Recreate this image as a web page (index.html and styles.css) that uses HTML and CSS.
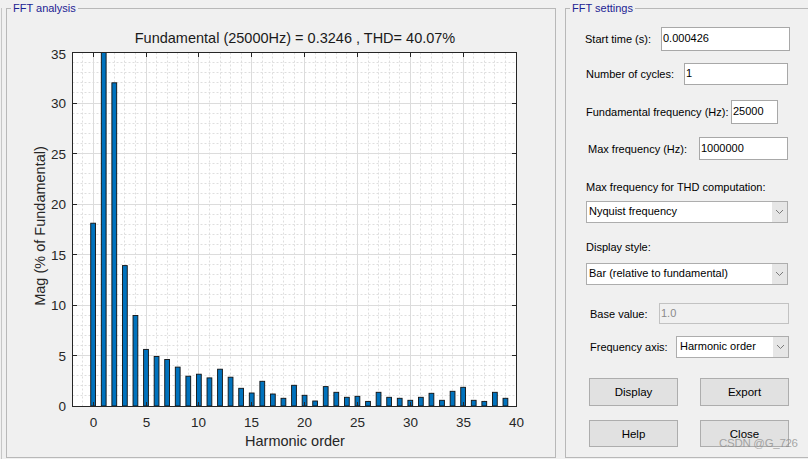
FILE: index.html
```html
<!DOCTYPE html>
<html>
<head>
<meta charset="utf-8">
<link rel="stylesheet" href="styles.css">
</head>
<body>
<div class="app">
  <div class="analysis-frame">
    <section class="group analysis">
      <span class="group-title">FFT analysis</span>
      <svg class="chart" width="548" height="448" viewBox="7 9 548 448" xmlns="http://www.w3.org/2000/svg">
        <rect x="72.5" y="52.5" width="444" height="354" fill="#ffffff"/>
        <path class="minor" d="M82.5 52.5V406M103.5 52.5V406M114.5 52.5V406M124.5 52.5V406M135.5 52.5V406M156.5 52.5V406M167.5 52.5V406M177.5 52.5V406M188.5 52.5V406M209.5 52.5V406M220.5 52.5V406M230.5 52.5V406M241.5 52.5V406M262.5 52.5V406M272.5 52.5V406M283.5 52.5V406M294.5 52.5V406M315.5 52.5V406M325.5 52.5V406M336.5 52.5V406M346.5 52.5V406M368.5 52.5V406M378.5 52.5V406M389.5 52.5V406M399.5 52.5V406M420.5 52.5V406M431.5 52.5V406M442.5 52.5V406M452.5 52.5V406M473.5 52.5V406M484.5 52.5V406M494.5 52.5V406M505.5 52.5V406"/>
        <path class="minor" d="M72.5 395.5H516M72.5 385.5H516M72.5 375.5H516M72.5 365.5H516M72.5 345.5H516M72.5 335.5H516M72.5 325.5H516M72.5 315.5H516M72.5 294.5H516M72.5 284.5H516M72.5 274.5H516M72.5 264.5H516M72.5 244.5H516M72.5 234.5H516M72.5 224.5H516M72.5 214.5H516M72.5 193.5H516M72.5 183.5H516M72.5 173.5H516M72.5 163.5H516M72.5 143.5H516M72.5 133.5H516M72.5 123.5H516M72.5 113.5H516M72.5 92.5H516M72.5 82.5H516M72.5 72.5H516M72.5 62.5H516"/>
        <path class="major" d="M93.5 52.5V406M146.5 52.5V406M198.5 52.5V406M251.5 52.5V406M304.5 52.5V406M357.5 52.5V406M410.5 52.5V406M463.5 52.5V406M72.5 355.5H516M72.5 305.5H516M72.5 254.5H516M72.5 204.5H516M72.5 153.5H516M72.5 103.5H516"/>
        <g class="bars">
          <rect x="90.74" y="223.2" width="4.8" height="182.8"/>
          <rect x="101.31" y="52.5" width="4.8" height="353.5"/>
          <rect x="111.89" y="82.8" width="4.8" height="323.2"/>
          <rect x="122.46" y="265.6" width="4.8" height="140.4"/>
          <rect x="133.03" y="315.5" width="4.8" height="90.5"/>
          <rect x="143.6" y="349.4" width="4.8" height="56.6"/>
          <rect x="154.17" y="356.5" width="4.8" height="49.5"/>
          <rect x="164.74" y="359.5" width="4.8" height="46.5"/>
          <rect x="175.31" y="367.1" width="4.8" height="38.9"/>
          <rect x="185.89" y="376.2" width="4.8" height="29.8"/>
          <rect x="196.46" y="374.2" width="4.8" height="31.8"/>
          <rect x="207.03" y="377.9" width="4.8" height="28.1"/>
          <rect x="217.6" y="369.2" width="4.8" height="36.8"/>
          <rect x="228.17" y="377.2" width="4.8" height="28.8"/>
          <rect x="238.74" y="388.3" width="4.8" height="17.7"/>
          <rect x="249.31" y="393" width="4.8" height="13"/>
          <rect x="259.89" y="381.3" width="4.8" height="24.7"/>
          <rect x="270.46" y="394" width="4.8" height="12"/>
          <rect x="281.03" y="398.3" width="4.8" height="7.7"/>
          <rect x="291.6" y="385.3" width="4.8" height="20.7"/>
          <rect x="302.17" y="395.3" width="4.8" height="10.7"/>
          <rect x="312.74" y="401" width="4.8" height="5"/>
          <rect x="323.31" y="386.6" width="4.8" height="19.4"/>
          <rect x="333.89" y="392.3" width="4.8" height="13.7"/>
          <rect x="344.46" y="397.3" width="4.8" height="8.7"/>
          <rect x="355.03" y="396.3" width="4.8" height="9.7"/>
          <rect x="365.6" y="401.4" width="4.8" height="4.6"/>
          <rect x="376.17" y="392.3" width="4.8" height="13.7"/>
          <rect x="386.74" y="397.3" width="4.8" height="8.7"/>
          <rect x="397.31" y="398.3" width="4.8" height="7.7"/>
          <rect x="407.89" y="400.3" width="4.8" height="5.7"/>
          <rect x="418.46" y="397.3" width="4.8" height="8.7"/>
          <rect x="429.03" y="393.3" width="4.8" height="12.7"/>
          <rect x="439.6" y="400.3" width="4.8" height="5.7"/>
          <rect x="450.17" y="391.3" width="4.8" height="14.7"/>
          <rect x="460.74" y="387.3" width="4.8" height="18.7"/>
          <rect x="471.31" y="400.3" width="4.8" height="5.7"/>
          <rect x="481.89" y="401.4" width="4.8" height="4.6"/>
          <rect x="492.46" y="392.3" width="4.8" height="13.7"/>
          <rect x="503.03" y="398.3" width="4.8" height="7.7"/>
        </g>
        <rect class="axes" x="72.5" y="52.5" width="444" height="354"/>
        <path class="ticks" d="M93.5 406V402M146.5 406V402M198.5 406V402M251.5 406V402M304.5 406V402M357.5 406V402M410.5 406V402M463.5 406V402M93.5 53V57M146.5 53V57M198.5 53V57M251.5 53V57M304.5 53V57M357.5 53V57M410.5 53V57M463.5 53V57M73 355.5H77M73 305.5H77M73 254.5H77M73 204.5H77M73 153.5H77M73 103.5H77M516 355.5H512M516 305.5H512M516 254.5H512M516 204.5H512M516 153.5H512M516 103.5H512"/>
        <g class="ytick">
          <text x="66" y="411">0</text>
          <text x="66" y="360.5">5</text>
          <text x="66" y="310">10</text>
          <text x="66" y="259.5">15</text>
          <text x="66" y="209">20</text>
          <text x="66" y="158.5">25</text>
          <text x="66" y="108">30</text>
          <text x="66" y="59">35</text>
        </g>
        <g class="xtick">
          <text x="93.5" y="427">0</text>
          <text x="146.5" y="427">5</text>
          <text x="198.5" y="427">10</text>
          <text x="251.5" y="427">15</text>
          <text x="304.5" y="427">20</text>
          <text x="357.5" y="427">25</text>
          <text x="410.5" y="427">30</text>
          <text x="463.5" y="427">35</text>
          <text x="516.5" y="427">40</text>
        </g>
        <text class="title" x="295" y="43">Fundamental (25000Hz) = 0.3246 , THD= 40.07%</text>
        <text class="label" x="295" y="446">Harmonic order</text>
        <text class="label" transform="translate(45 226) rotate(-90)">Mag (% of Fundamental)</text>
      </svg>
    </section>
  </div>

  <section class="group settings">
    <span class="group-title">FFT settings</span>

    <div class="row r-start">
      <label class="lbl">Start time (s):</label>
      <input class="field" type="text" value="0.000426">
    </div>
    <div class="row r-cycles">
      <label class="lbl">Number of cycles:</label>
      <input class="field" type="text" value="1">
    </div>
    <div class="row r-fund">
      <label class="lbl">Fundamental frequency (Hz):</label>
      <input class="field" type="text" value="25000">
    </div>
    <div class="row r-maxf">
      <label class="lbl">Max frequency (Hz):</label>
      <input class="field" type="text" value="1000000">
    </div>
    <div class="caption r-thd">Max frequency for THD computation:</div>
    <div class="select r-nyq">
      <span class="sel-text">Nyquist frequency</span>
      <span class="arrow"><svg width="9" height="6" viewBox="0 0 9 6"><polyline points="1,1 4.5,4.5 8,1" fill="none" stroke="#7a7a7a" stroke-width="1"/></svg></span>
    </div>
    <div class="caption r-dstyle">Display style:</div>
    <div class="select r-bar">
      <span class="sel-text">Bar (relative to fundamental)</span>
      <span class="arrow"><svg width="9" height="6" viewBox="0 0 9 6"><polyline points="1,1 4.5,4.5 8,1" fill="none" stroke="#7a7a7a" stroke-width="1"/></svg></span>
    </div>
    <div class="row r-base">
      <label class="lbl">Base value:</label>
      <input class="field disabled" type="text" value="1.0" disabled>
    </div>
    <div class="row r-faxis">
      <label class="lbl">Frequency axis:</label>
      <div class="select">
        <span class="sel-text">Harmonic order</span>
        <span class="arrow"><svg width="9" height="6" viewBox="0 0 9 6"><polyline points="1,1 4.5,4.5 8,1" fill="none" stroke="#7a7a7a" stroke-width="1"/></svg></span>
      </div>
    </div>
    <div class="btn-row r-btn1">
      <button class="btn">Display</button>
      <button class="btn">Export</button>
    </div>
    <div class="btn-row r-btn2">
      <button class="btn">Help</button>
      <button class="btn">Close</button>
    </div>
    <span class="watermark">CSDN @G_726</span>
  </section>
</div>
</body>
</html>
```

FILE: styles.css
```css
html, body {
  margin: 0;
  padding: 0;
  background: #f0f0f0;
  overflow: hidden;
}
body {
  width: 808px;
  height: 459px;
  font-family: "Liberation Sans", Arial, sans-serif;
  font-size: 11px;
  color: #000;
}
.app {
  display: flex;
  align-items: flex-start;
  padding-top: 8px;
  height: 459px;
  box-sizing: border-box;
}
.analysis-frame {
  margin-left: 1px;
  border-left: 1px solid #c6c6c6;
  padding-left: 4px;
  height: 451px;
}
.group {
  position: relative;
  box-sizing: border-box;
  border: 1px solid #b8b8b8;
  height: 450px;
  flex: none;
}
.group-title {
  position: absolute;
  top: -7px;
  left: 4px;
  padding: 0 2px;
  background: #f0f0f0;
  color: #1c2393;
  font-size: 11px;
  line-height: 13px;
}
.analysis {
  width: 550px;
}
.chart {
  display: block;
  font-family: "Liberation Sans", Arial, sans-serif;
}
.minor {
  fill: none;
  stroke: #dedede;
  stroke-width: 1;
  stroke-dasharray: 2 2;
}
.major {
  fill: none;
  stroke: #dcdcdc;
  stroke-width: 1;
}
.bars rect {
  fill: #0072bd;
  stroke: #111;
  stroke-width: 0.9;
}
.axes {
  fill: none;
  stroke: #262626;
  stroke-width: 1;
}
.ticks {
  fill: none;
  stroke: #262626;
  stroke-width: 1;
}
.ytick text {
  font-size: 13.5px;
  fill: #262626;
  text-anchor: end;
}
.xtick text {
  font-size: 13.5px;
  fill: #262626;
  text-anchor: middle;
}
.title {
  font-size: 14.5px;
  fill: #1a1a1a;
  text-anchor: middle;
}
.label {
  font-size: 14.5px;
  fill: #262626;
  text-anchor: middle;
}

/* settings panel */
.settings {
  width: 260px;
  margin-left: 9px;
  display: flex;
  flex-direction: column;
}
.row {
  display: flex;
  align-items: center;
  flex: none;
}
.lbl {
  flex: none;
  white-space: nowrap;
}
.field {
  box-sizing: border-box;
  height: 100%;
  margin: 0;
  border: 1px solid #a8a8a8;
  background: #fff;
  padding: 0 0 2px 1px;
  font-family: "Liberation Sans", Arial, sans-serif;
  font-size: 11px;
  color: #000;
  outline: none;
}
.field.disabled {
  background: #f0f0f0;
  color: #8a8a8a;
  border-color: #c2c2c2;
  -webkit-text-fill-color: #8a8a8a;
  opacity: 1;
}
.caption {
  flex: none;
  height: 14px;
  line-height: 14px;
  padding-left: 20px;
}
.select {
  box-sizing: border-box;
  display: flex;
  align-items: stretch;
  border: 1px solid #adadad;
  background: #fff;
  flex: none;
}
.sel-text {
  flex: 1;
  display: flex;
  align-items: center;
  padding: 0 0 2px 2px;
  white-space: nowrap;
}
.arrow {
  width: 15px;
  background: #e6e6e6;
  display: flex;
  align-items: center;
  justify-content: center;
}
.r-start { margin-top: 18px; height: 24px; padding-left: 19px; }
.r-start .lbl { width: 76px; }
.r-start .field { width: 129px; }
.r-cycles { margin-top: 12px; height: 22px; padding-left: 20px; }
.r-cycles .lbl { width: 98px; }
.r-cycles .field { width: 104px; }
.r-fund { margin-top: 15px; height: 24px; padding-left: 20px; }
.r-fund .lbl { width: 145px; }
.r-fund .field { width: 47px; }
.r-maxf { margin-top: 13px; height: 23px; padding-left: 22px; }
.r-maxf .lbl { width: 111px; }
.r-maxf .field { width: 89px; }
.r-thd { margin-top: 20px; }
.r-nyq { margin-top: 7px; margin-left: 20px; width: 202px; height: 22px; }
.r-dstyle { margin-top: 17px; }
.r-bar { margin-top: 9px; margin-left: 20px; width: 202px; height: 22px; }
.r-base { margin-top: 18px; height: 21px; padding-left: 24px; }
.r-base .lbl { width: 69px; }
.r-base .field { width: 130px; }
.r-faxis { margin-top: 12px; height: 22px; padding-left: 24px; }
.r-faxis .lbl { width: 86px; }
.r-faxis .select { width: 113px; height: 22px; }
.r-faxis .sel-text { padding-left: 3px; }
.btn-row {
  display: flex;
  gap: 22px;
  padding-left: 23px;
  flex: none;
}
.r-btn1 { margin-top: 20px; }
.r-btn2 { margin-top: 14px; }
.btn {
  box-sizing: border-box;
  width: 89px;
  height: 28px;
  margin: 0;
  padding: 0;
  border: 1px solid #adadad;
  background: #e1e1e1;
  font-family: "Liberation Sans", Arial, sans-serif;
  font-size: 11.5px;
  color: #000;
}
.r-btn2 .btn { height: 27px; }
.watermark {
  position: absolute;
  left: 153px;
  top: 428px;
  font-family: "Liberation Sans", Arial, sans-serif;
  font-size: 11.5px;
  letter-spacing: -0.3px;
  color: rgba(140, 140, 140, 0.75);
  white-space: nowrap;
  pointer-events: none;
}
```
